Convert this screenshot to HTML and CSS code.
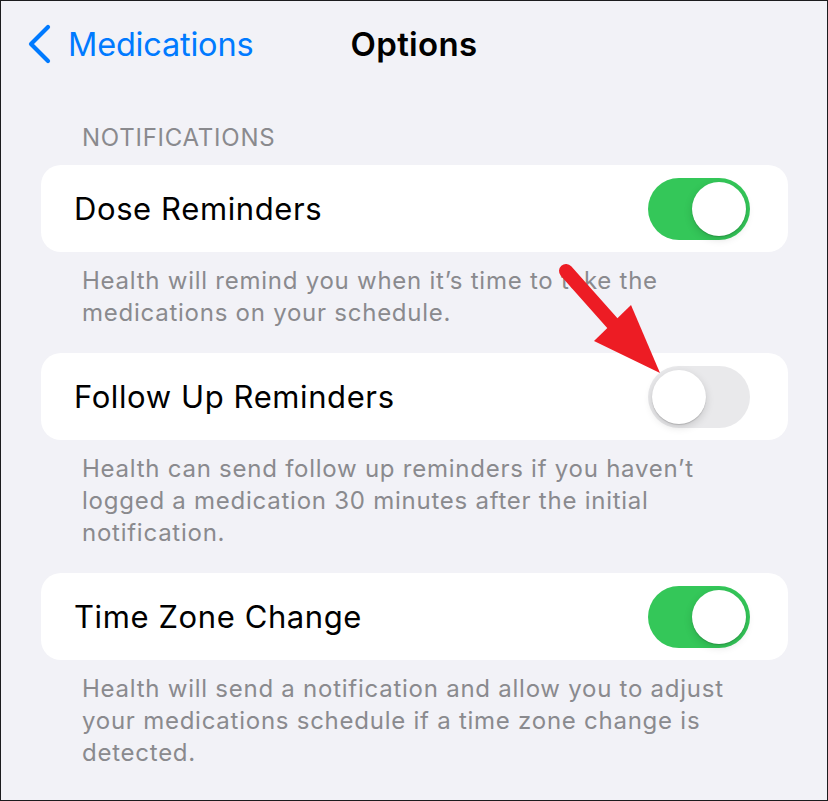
FILE: index.html
```html
<!DOCTYPE html>
<html lang="en">
<head>
<meta charset="UTF-8" />
<title>Options</title>
<link rel="stylesheet" href="styles.css">
</head>
<body>
  <div class="screen">
    <header class="navbar">
      <a class="back" href="#">
        <svg class="chevron" width="24" height="40" viewBox="0 0 24 40">
          <path d="M21 3 L4 20 L21 37" fill="none" stroke="#007aff" stroke-width="4.2" stroke-linecap="round" stroke-linejoin="round"/>
        </svg>
        <span>Medications</span>
      </a>
      <h1 class="title">Options</h1>
      <div></div>
    </header>

    <div class="section-header">NOTIFICATIONS</div>

    <div class="cell">
      <span class="label">Dose Reminders</span>
      <span class="switch on"><span class="knob"></span></span>
    </div>
    <p class="footer">Health will remind you when it’s time to take the medications on your schedule.</p>

    <div class="cell">
      <span class="label">Follow Up Reminders</span>
      <span class="switch"><span class="knob"></span></span>
    </div>
    <p class="footer">Health can send follow up reminders if you haven’t logged a medication 30 minutes after the initial notification.</p>

    <div class="cell">
      <span class="label">Time Zone Change</span>
      <span class="switch on"><span class="knob"></span></span>
    </div>
    <p class="footer">Health will send a notification and allow you to adjust your medications schedule if a time zone change is detected.</p>

    <!-- red callout arrow pointing at the follow up switch -->
    <svg class="callout" width="828" height="801" viewBox="0 0 828 801">
      <line x1="566" y1="271" x2="614" y2="325" stroke="#ed1c24" stroke-width="14" stroke-linecap="round"/>
      <polygon points="594,341 631,305 660,373" fill="#ed1c24"/>
    </svg>
  </div>
</body>
</html>
```

FILE: styles.css
```css
* {
  box-sizing: border-box;
}
body {
  margin: 0;
  background: #fff;
  font-family: Inter, "Noto Sans", sans-serif;
}
.screen {
  position: relative;
  width: 828px;
  height: 801px;
  background: #f2f2f7;
  border: 1px solid #1c1c1e;
  overflow: hidden;
}
.navbar {
  display: grid;
  grid-template-columns: 1fr auto 1fr;
  align-items: center;
  height: 86px;
  padding: 0 26px;
}
.back {
  display: flex;
  align-items: center;
  gap: 17px;
  color: #007aff;
  text-decoration: none;
  font-size: 32.5px;
  letter-spacing: -0.2px;
}
.title {
  margin: 0;
  font-size: 33px;
  font-weight: 600;
  color: #000;
  letter-spacing: 0.3px;
}
.section-header {
  padding: 35px 0 0 81px;
  font-size: 24px;
  line-height: 32px;
  color: #8a8a8e;
  letter-spacing: 0.75px;
}
.cell {
  display: flex;
  align-items: center;
  justify-content: space-between;
  height: 87px;
  margin: 11px 39px 0 40px;
  padding: 0 38px 0 33px;
  background: #fff;
  border-radius: 20px;
}
.label {
  font-size: 31px;
  color: #000;
  letter-spacing: 0.6px;
}
.switch {
  position: relative;
  width: 102px;
  height: 62px;
  border-radius: 31px;
  background: #e9e9eb;
}
.switch.on {
  background: #34c759;
}
.knob {
  position: absolute;
  top: 4px;
  left: 4px;
  width: 54px;
  height: 54px;
  border-radius: 50%;
  background: #fff;
  box-shadow: 0 3px 8px rgba(0, 0, 0, 0.15), 0 1px 1px rgba(0, 0, 0, 0.16);
}
.switch.on .knob {
  left: 44px;
}
.footer {
  margin: 0 0 24px;
  padding: 13px 60px 0 81px;
  font-size: 24px;
  line-height: 32px;
  color: #8a8a8e;
  letter-spacing: 0.75px;
}
.callout {
  position: absolute;
  top: -1px;
  left: -1px;
  pointer-events: none;
}
```
